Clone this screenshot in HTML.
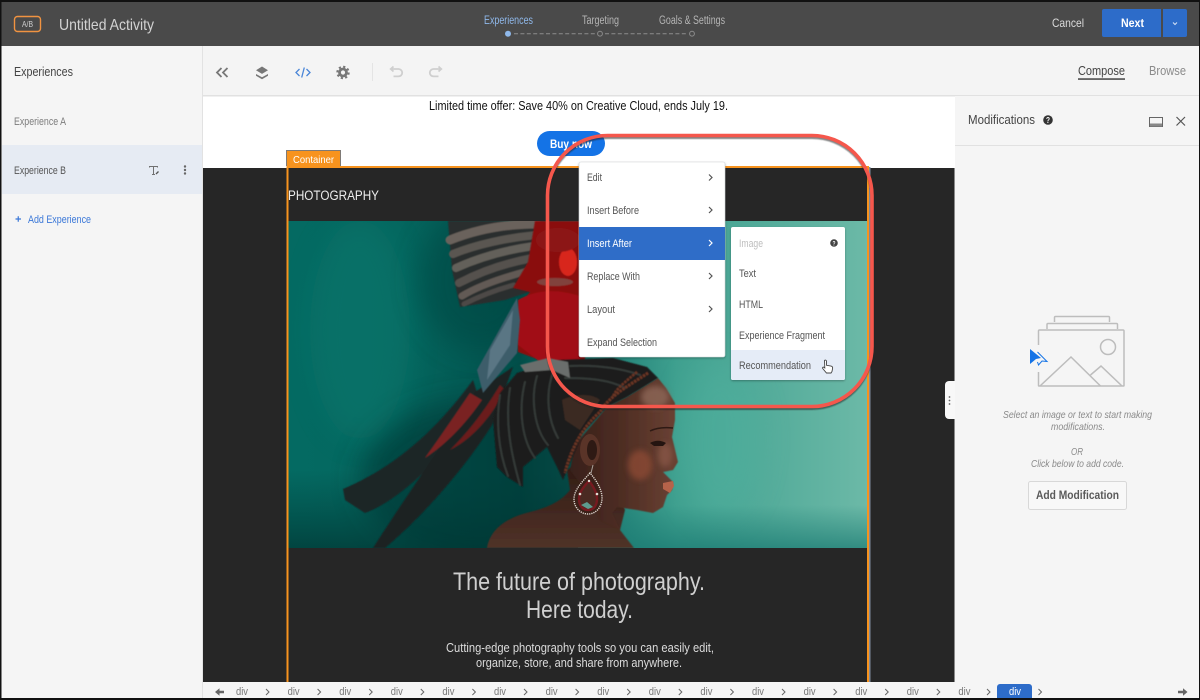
<!DOCTYPE html>
<html lang="en"><head><meta charset="utf-8"><title>Untitled Activity</title>
<style>
html,body{margin:0;padding:0;background:#000;width:1200px;height:700px;overflow:hidden}
svg{display:block}
text{font-family:"Liberation Sans",sans-serif;fill:#555;font-size:11px}
.i{font-style:italic;fill:#8a8a8a;font-size:10.500px}
.m{fill:#555;font-size:11px}
.d{fill:#777;font-size:11px}
</style></head><body>
<svg width="1200" height="700" viewBox="0 0 1200 700" xmlns="http://www.w3.org/2000/svg">
<defs>
<linearGradient id="bg" x1="0" x2="1" y1="0" y2="0">
<stop offset="0" stop-color="#046a62"/><stop offset=".19" stop-color="#05675f"/><stop offset=".31" stop-color="#035a54"/><stop offset=".4" stop-color="#024e49"/><stop offset=".53" stop-color="#1a7a72"/><stop offset=".67" stop-color="#3fa08f"/><stop offset="1" stop-color="#6cb9a7"/>
</linearGradient>
<linearGradient id="bt" x1="0" x2="0" y1="0" y2="1">
<stop offset="0" stop-color="#003c3a" stop-opacity="0"/><stop offset="1" stop-color="#003532" stop-opacity=".7"/>
</linearGradient>
<linearGradient id="bt2" x1="0" x2="0" y1="0" y2="1">
<stop offset="0" stop-color="#1a7a72" stop-opacity="0"/><stop offset="1" stop-color="#1a7a72" stop-opacity=".7"/>
</linearGradient>
<linearGradient id="skin" x1="0" x2="1" y1="0" y2="0">
<stop offset="0" stop-color="#38201a"/><stop offset=".5" stop-color="#4f2e24"/><stop offset="1" stop-color="#6b4234"/>
</linearGradient>
<linearGradient id="sh" x1="0" x2="0" y1="0" y2="1">
<stop offset="0" stop-color="#2c1812"/><stop offset="1" stop-color="#503228"/>
</linearGradient>
<filter id="b05" x="-10%" y="-10%" width="120%" height="120%"><feGaussianBlur stdDeviation=".6"/></filter>
<filter id="b1" x="-20%" y="-20%" width="140%" height="140%"><feGaussianBlur stdDeviation="1"/></filter>
<filter id="b3" x="-40%" y="-40%" width="180%" height="180%"><feGaussianBlur stdDeviation="3"/></filter>
<filter id="b12" x="-60%" y="-60%" width="220%" height="220%"><feGaussianBlur stdDeviation="14"/></filter>
<filter id="ms" x="-10%" y="-10%" width="120%" height="120%"><feDropShadow dx="0" dy="1" stdDeviation="1" flood-color="#000" flood-opacity=".3"/></filter>
<clipPath id="imgc"><rect x="288" y="221" width="580" height="327"/></clipPath>
</defs>

<rect width="1200" height="700" fill="#111"/>
<!-- top bar -->
<rect x="1" y="2" width="1198" height="44" fill="#4a4a4a"/>
<rect x="14.500" y="16.500" width="26" height="15" rx="3" fill="none" stroke="#f09341" stroke-width="1.400"/>
<text x="22" y="27" textLength="11" lengthAdjust="spacingAndGlyphs" style="font-size:8.500px;fill:#cfcfcf">A/B</text>
<text x="59" y="30" textLength="95" lengthAdjust="spacingAndGlyphs" style="font-size:16px;fill:#d2d2d2">Untitled Activity</text>
<text x="484" y="24" textLength="49" lengthAdjust="spacingAndGlyphs" style="font-size:11.500px;fill:#8fb8ea">Experiences</text>
<text x="582" y="24" textLength="37" lengthAdjust="spacingAndGlyphs" style="font-size:11.500px;fill:#b5b5b5">Targeting</text>
<text x="659" y="24" textLength="66" lengthAdjust="spacingAndGlyphs" style="font-size:11.500px;fill:#b5b5b5">Goals &amp; Settings</text>
<circle cx="508" cy="33.700" r="3" fill="#8fb8ea"/>
<path d="M514 33.700H595M605 33.700H687" stroke="#8c8c8c" stroke-width="1" stroke-dasharray="4 2.400" fill="none"/>
<circle cx="600" cy="33.700" r="2.400" fill="none" stroke="#8c8c8c" stroke-width="1"/>
<circle cx="692" cy="33.700" r="2.400" fill="none" stroke="#8c8c8c" stroke-width="1"/>
<text x="1052" y="27" textLength="32" lengthAdjust="spacingAndGlyphs" style="font-size:12px;fill:#dcdcdc">Cancel</text>
<path d="M1104 9h57v28h-57a2 2 0 0 1-2-2v-24a2 2 0 0 1 2-2z" fill="#2d6cc9"/>
<path d="M1163 9h22a2 2 0 0 1 2 2v24a2 2 0 0 1-2 2h-22z" fill="#2d6cc9"/>
<text x="1121" y="27" textLength="23" lengthAdjust="spacingAndGlyphs" style="font-size:12px;fill:#fff;font-weight:bold">Next</text>
<path d="M1173 22.500l2 2 2-2" stroke="#d8e4f6" fill="none" stroke-width="1"/>

<!-- left panel -->
<rect x="1" y="46" width="201" height="652" fill="#f5f5f5"/>
<rect x="202" y="46" width="1" height="652" fill="#e2e2e2"/>
<text x="14" y="76" textLength="59" lengthAdjust="spacingAndGlyphs" style="font-size:12.500px;fill:#444">Experiences</text>
<text x="14" y="125" textLength="52" lengthAdjust="spacingAndGlyphs" style="font-size:11px;fill:#7c7c7c">Experience A</text>
<rect x="2" y="145" width="200" height="49" fill="#e6ebf3"/>
<text x="14" y="174" textLength="52" lengthAdjust="spacingAndGlyphs" style="font-size:11px;fill:#555">Experience B</text>
<path d="M149.500 167.500V166.500H157.500V167.500M153.500 166.500V174.500M152 174.500H155" stroke="#707070" fill="none" stroke-width="1"/>
<path d="M156 174l2.500-2.500" stroke="#555" stroke-width="1.300"/>
<circle cx="185" cy="166.500" r="1.200" fill="#666"/><circle cx="185" cy="170" r="1.200" fill="#666"/><circle cx="185" cy="173.500" r="1.200" fill="#666"/>
<path d="M15.500 219H21M18.250 216.200V221.800" stroke="#3b78d8" stroke-width="1.200"/>
<text x="28" y="223" textLength="63" lengthAdjust="spacingAndGlyphs" style="font-size:11px;fill:#3b78d8">Add Experience</text>

<!-- toolbar -->
<rect x="203" y="46" width="996" height="49" fill="#f4f4f4"/>
<rect x="203" y="95" width="996" height="1.500" fill="#e1e1e1"/>
<path d="M221.500 68l-4.500 4.500 4.500 4.500M227.500 68l-4.500 4.500 4.500 4.500" fill="none" stroke="#777" stroke-width="1.800"/>
<path d="M262 66.500l6 3.700-6 3.700-6-3.700z" fill="#777"/>
<path d="M256 74l6 3.300 6-3.300v1.800l-6 3.400-6-3.400z" fill="#777"/>
<path d="M299.500 69l-3.500 3.500 3.500 3.500M306.500 69l3.500 3.500-3.500 3.500M304.300 67.500l-2.600 10" fill="none" stroke="#4a86d8" stroke-width="1.300"/>
<circle cx="343" cy="72.500" r="3.500" fill="none" stroke="#777" stroke-width="2.800"/>
<circle cx="343" cy="72.500" r="5.700" fill="none" stroke="#777" stroke-width="2" stroke-dasharray="2.200 2.270"/>
<rect x="372" y="63" width="1" height="18" fill="#e4e4e4"/>
<path d="M391 69h7.500a3.700 3.700 0 0 1 0 7.400h-5M393.500 66.500l-2.800 2.500 2.800 2.500" fill="none" stroke="#cfcfcf" stroke-width="1.800"/>
<path d="M441 69h-7.500a3.700 3.700 0 0 0 0 7.400h5M438.500 66.500l2.800 2.500-2.800 2.500" fill="none" stroke="#cfcfcf" stroke-width="1.800"/>
<text x="1078" y="75" textLength="47" lengthAdjust="spacingAndGlyphs" style="font-size:12.500px;fill:#444">Compose</text>
<rect x="1078" y="78.300" width="47" height="1.500" fill="#444"/>
<text x="1149" y="75" textLength="37" lengthAdjust="spacingAndGlyphs" style="font-size:12.500px;fill:#8a8a8a">Browse</text>

<!-- right panel -->
<rect x="955" y="96" width="244" height="602" fill="#f5f5f5"/>
<rect x="955" y="145" width="244" height="1" fill="#e1e1e1"/>
<text x="968" y="124" textLength="67" lengthAdjust="spacingAndGlyphs" style="font-size:12.500px;fill:#444">Modifications</text>
<circle cx="1048" cy="120" r="4.800" fill="#333"/>
<text x="1046" y="123" textLength="4" lengthAdjust="spacingAndGlyphs" style="font-size:8px;fill:#fff;font-weight:bold">?</text>
<rect x="1149.500" y="117.500" width="13" height="9" fill="none" stroke="#666" stroke-width="1"/>
<rect x="1150" y="123.500" width="12" height="3" fill="#888"/>
<path d="M1176.500 117l8.500 8.500M1185 117l-8.500 8.500" stroke="#555" stroke-width="1.200"/>
<g fill="none" stroke="#bdbdbd" stroke-width="1.500">
<path d="M1054.500 322v-4.500a1 1 0 0 1 1-1h53a1 1 0 0 1 1 1v4.500"/>
<path d="M1047 329v-4.500a1 1 0 0 1 1-1h68.500a1 1 0 0 1 1 1v4.500"/>
<path d="M1038.500 345v-14a1 1 0 0 1 1-1h83.500a1 1 0 0 1 1 1v54.500a.5.5 0 0 1-.5.5h-84.500a.5.5 0 0 1-.5-.5v-13.500"/>
<circle cx="1108" cy="347" r="7.500"/>
<path d="M1040 386l31-29 29.500 29M1090.500 375l10.500-9 21 20"/>
</g>
<path d="M1030 349l11 9-5 1-6 5z" fill="#1473e6"/>
<path d="M1037.500 352l9.500 9.500-5-.5-3.500 4-1-3" fill="none" stroke="#1473e6" stroke-width="1"/>
<text class="i" x="1003" y="418" textLength="149" lengthAdjust="spacingAndGlyphs">Select an image or text to start making</text>
<text class="i" x="1051" y="430" textLength="54" lengthAdjust="spacingAndGlyphs">modifications.</text>
<text class="i" x="1071" y="455" textLength="12" lengthAdjust="spacingAndGlyphs">OR</text>
<text class="i" x="1031" y="467" textLength="93" lengthAdjust="spacingAndGlyphs">Click below to add code.</text>
<rect x="1028.500" y="481.500" width="98" height="28" rx="2" fill="#f8f8f8" stroke="#d8d8d8"/>
<text x="1036" y="499" textLength="83" lengthAdjust="spacingAndGlyphs" style="font-size:11.500px;fill:#5a5a5a;font-weight:bold">Add Modification</text>

<!-- web page -->
<rect x="203" y="96.500" width="752" height="72" fill="#fff"/>
<rect x="203" y="168" width="751" height="514" fill="#262626"/>
<rect x="954" y="168" width="1" height="514" fill="#8a8a8a"/>
<text x="429" y="110" textLength="299" lengthAdjust="spacingAndGlyphs" style="font-size:13px;fill:#111">Limited time offer: Save 40% on Creative Cloud, ends July 19.</text>
<rect x="537" y="131" width="68" height="25" rx="12.500" fill="#1473e6"/>
<text x="550" y="148" textLength="42" lengthAdjust="spacingAndGlyphs" style="font-size:12px;fill:#fff;font-weight:bold">Buy now</text>
<text x="288" y="200" textLength="91" lengthAdjust="spacingAndGlyphs" style="font-size:13.500px;fill:#ececec">PHOTOGRAPHY</text>

<!-- photo -->
<g clip-path="url(#imgc)">
<rect x="288" y="221" width="580" height="327" fill="url(#bg)"/>
<ellipse cx="480" cy="480" rx="120" ry="80" fill="#013a37" opacity=".7" filter="url(#b12)"/>
<ellipse cx="360" cy="330" rx="50" ry="110" fill="#087a70" opacity=".45" filter="url(#b12)"/>
<ellipse cx="480" cy="280" rx="60" ry="70" fill="#024a45" opacity=".6" filter="url(#b12)"/>
<ellipse cx="720" cy="440" rx="40" ry="80" fill="#50b09e" opacity=".5" filter="url(#b12)"/>
<rect x="288" y="470" width="290" height="78" fill="url(#bt)"/>
<rect x="578" y="505" width="290" height="43" fill="url(#bt2)"/>
<!-- tail feathers -->
<g filter="url(#b05)">
<path d="M473 380C440 425 400 465 343 489L345 500 365 513C400 500 440 460 482 408z" fill="#1f2626"/>
<path d="M513 367L475 392C440 450 410 490 373 548H385C430 510 470 460 492 425z" fill="#1b2323"/>
<path d="M470 393C455 415 445 430 425 458 445 445 465 425 482 400z" fill="#7a2220"/>
<path d="M500 385C485 410 470 430 450 450 470 440 490 420 505 390z" fill="#6a1e1c"/>
</g>
<!-- wing feathers -->
<g filter="url(#b05)">
<path d="M448 221H540L535 290 505 300 460 307 452 270z" fill="#2a2f2e"/>
<g fill="none" stroke-linecap="round">
<path d="M537 224C500 224 470 232 450 240" stroke="#6a625c" stroke-width="9"/>
<path d="M537 235C505 238 475 245 453 254" stroke="#5a5651" stroke-width="8"/>
<path d="M534 246C505 250 478 258 456 268" stroke="#64605a" stroke-width="8"/>
<path d="M533 258C505 263 480 272 459 283" stroke="#55514d" stroke-width="8"/>
<path d="M528 271C505 277 480 285 462 296" stroke="#625a54" stroke-width="7"/>
<path d="M514 285C495 290 478 297 464 304" stroke="#4e4a46" stroke-width="5"/>
</g>
</g>
<!-- red body -->
<g filter="url(#b05)">
<path d="M535 221H585V362H545L518 352 515 310 530 292 513 288 528 262z" fill="#8a0e10"/>
<path d="M518 300C535 290 555 288 580 296V362H540L518 345z" fill="#a11012"/>
<ellipse cx="568" cy="262" rx="9" ry="14" fill="#d8261c"/>
<ellipse cx="558" cy="240" rx="22" ry="12" fill="#8c1818"/>
<ellipse cx="555" cy="282" rx="18" ry="4" fill="#7e5a52" opacity=".7"/>
</g>
<!-- blue wing -->
<path d="M517 298L477 370 483 393 517 353 520 320z" fill="#3e5d6a" filter="url(#b05)"/>
<path d="M513 310L490 350 487 380 510 345z" fill="#5a7684" filter="url(#b05)"/>
<!-- shoulders and neck -->
<path d="M487 548C490 530 505 518 530 512 545 508 560 503 570 490L567 470 600 450 625 510 620 530 634 548z" fill="url(#sh)" filter="url(#b05)"/>
<!-- face -->
<path d="M658 378L666 388 675 403 675 420 672 437 678 462 673 470 663 472 673 482 672 490 667 495 663 507 653 513 637 510 617 507 612 513 620 530 600 520 585 490 570 470 575 445 607 407 627 397z" fill="url(#skin)" filter="url(#b05)"/>
<ellipse cx="655" cy="397" rx="14" ry="11" fill="#8e6858" opacity=".8" filter="url(#b3)"/>
<ellipse cx="640" cy="465" rx="12" ry="15" fill="#8f4c36" opacity=".75" filter="url(#b3)"/>
<ellipse cx="665" cy="455" rx="7" ry="12" fill="#8d5a48" opacity=".7" filter="url(#b3)"/>
<path d="M650 443c5-3 11-3 16 0l-3 3h-9z" fill="#241410"/>
<path d="M650 431c6-3 14-4 23-3" stroke="#2e1a14" stroke-width="1.500" fill="none"/>
<path d="M663 483l10-2 1 5-4 7-7-4z" fill="#b5634a"/>
<!-- hair -->
<g filter="url(#b05)">
<path d="M517 373L557 360 613 358 647 367 658 378 627 397 607 407 583 433 570 463 563 480 557 467 547 447 523 467 523 487 507 477 497 467 493 420 500 393z" fill="#1d1c1b"/>
<g stroke="#343a39" stroke-width="2" fill="none" stroke-linecap="round">
<path d="M500 395C496 420 498 450 508 476"/><path d="M510 388C505 420 510 450 520 485"/><path d="M525 382C518 410 522 440 535 458"/><path d="M537 376C530 400 535 430 548 445"/><path d="M553 372C545 395 548 420 558 438"/><path d="M570 366C595 365 620 368 640 375"/><path d="M565 378C590 378 610 380 625 388"/>
</g>
<path d="M562 400C572 395 590 392 600 400L580 430 565 420z" fill="#3b2a22"/>
<path d="M520 365L548 358 568 362 570 378 552 370 525 372z" fill="#6a6e6c"/>
<path d="M648 373C630 385 610 395 600 412 585 425 572 445 565 473" fill="none" stroke="#6a3524" stroke-width="3" stroke-dasharray="2.500 1"/>
<path d="M637 372C625 382 615 390 613 397" fill="none" stroke="#6a3524" stroke-width="2.500" stroke-dasharray="2.500 1"/>
</g>
<!-- ear + earring -->
<ellipse cx="590" cy="450" rx="10" ry="16" fill="#5a3428"/>
<ellipse cx="592" cy="450" rx="5" ry="10" fill="#2e1a14"/>
<path d="M593 465l-2 8" stroke="#a8a098" stroke-width="1" fill="none"/>
<path d="M590 473C582 482 574 490 574 499 574 508 581 514 588 514 596 514 602 507 602 498 602 489 596 480 590 473z" fill="#3a2018" stroke="#dcd4cc" stroke-width="1.400" stroke-dasharray="1.300 .9"/>
<path d="M589 481C583 487 579 493 579 499 579 506 583 510 588 510 594 510 597 505 597 499 597 492 593 486 589 481z" fill="#4a2a22" stroke="#761a20" stroke-width="2.400"/>
<path d="M581 505l7 4 5-2-6-5z" fill="#5e9a8e"/>
<circle cx="580" cy="494" r="1.300" fill="#e4ddd4"/><circle cx="597" cy="494" r="1.300" fill="#e4ddd4"/><circle cx="589" cy="481" r="1.200" fill="#e4ddd4"/>
</g>
<!-- selection -->
<path d="M287.500 682V167H868V682" fill="none" stroke="#f7931e" stroke-width="2"/>
<rect x="869" y="167" width="1.500" height="515" fill="#7e8a9c"/>
<rect x="286" y="150" width="55" height="16" fill="#f7931e"/>
<path d="M286.500 166v-15.500h54v15.500" fill="none" stroke="#7f7a76" stroke-width="1"/>
<text x="293" y="163" textLength="41" lengthAdjust="spacingAndGlyphs" style="font-size:10.500px;fill:#fff">Container</text>

<text x="453" y="590" textLength="252" lengthAdjust="spacingAndGlyphs" style="font-size:25px;fill:#cfcfcf">The future of photography.</text>
<text x="526" y="618" textLength="107" lengthAdjust="spacingAndGlyphs" style="font-size:25px;fill:#cfcfcf">Here today.</text>
<text x="446" y="652" textLength="268" lengthAdjust="spacingAndGlyphs" style="font-size:13px;fill:#dcdcdc">Cutting-edge photography tools so you can easily edit,</text>
<text x="476" y="667" textLength="206" lengthAdjust="spacingAndGlyphs" style="font-size:13px;fill:#dcdcdc">organize, store, and share from anywhere.</text>

<!-- handle -->
<path d="M955 381h-6a4 4 0 0 0-4 4v30a4 4 0 0 0 4 4h6z" fill="#f8f8f8"/>
<circle cx="949.500" cy="397" r=".9" fill="#666"/><circle cx="949.500" cy="400.500" r=".9" fill="#666"/><circle cx="949.500" cy="404" r=".9" fill="#666"/>

<!-- breadcrumb -->
<rect x="203" y="682" width="996" height="16" fill="#f5f5f5"/>
<path d="M224 690.800h-4.500v-2.500l-4.500 3.700 4.500 3.700v-2.500h4.500z" fill="#666"/>
<path d="M1178 690.800h5v-2.500l4.500 3.700-4.500 3.700v-2.500h-5z" fill="#666"/>
<g>
<text class="d" x="236" y="695" textLength="12" lengthAdjust="spacingAndGlyphs">div</text>
<text class="d" x="287.600" y="695" textLength="12" lengthAdjust="spacingAndGlyphs">div</text>
<text class="d" x="339.200" y="695" textLength="12" lengthAdjust="spacingAndGlyphs">div</text>
<text class="d" x="390.800" y="695" textLength="12" lengthAdjust="spacingAndGlyphs">div</text>
<text class="d" x="442.400" y="695" textLength="12" lengthAdjust="spacingAndGlyphs">div</text>
<text class="d" x="494" y="695" textLength="12" lengthAdjust="spacingAndGlyphs">div</text>
<text class="d" x="545.600" y="695" textLength="12" lengthAdjust="spacingAndGlyphs">div</text>
<text class="d" x="597.200" y="695" textLength="12" lengthAdjust="spacingAndGlyphs">div</text>
<text class="d" x="648.800" y="695" textLength="12" lengthAdjust="spacingAndGlyphs">div</text>
<text class="d" x="700.400" y="695" textLength="12" lengthAdjust="spacingAndGlyphs">div</text>
<text class="d" x="752" y="695" textLength="12" lengthAdjust="spacingAndGlyphs">div</text>
<text class="d" x="803.600" y="695" textLength="12" lengthAdjust="spacingAndGlyphs">div</text>
<text class="d" x="855.200" y="695" textLength="12" lengthAdjust="spacingAndGlyphs">div</text>
<text class="d" x="906.800" y="695" textLength="12" lengthAdjust="spacingAndGlyphs">div</text>
<text class="d" x="958.400" y="695" textLength="12" lengthAdjust="spacingAndGlyphs">div</text>
</g>
<path d="M266 689l3 3-3 3M317.600 689l3 3-3 3M369.200 689l3 3-3 3M420.800 689l3 3-3 3M472.400 689l3 3-3 3M524 689l3 3-3 3M575.600 689l3 3-3 3M627.200 689l3 3-3 3M678.800 689l3 3-3 3M730.400 689l3 3-3 3M782 689l3 3-3 3M833.600 689l3 3-3 3M885.200 689l3 3-3 3M936.800 689l3 3-3 3M987 689l3 3-3 3M1038.500 689l3 3-3 3" fill="none" stroke="#666" stroke-width="1"/>
<path d="M997 698v-11a3 3 0 0 1 3-3h29a3 3 0 0 1 3 3v11z" fill="#2d6cc9"/>
<text x="1009" y="695" textLength="12" lengthAdjust="spacingAndGlyphs" style="font-size:11px;fill:#fff">div</text>

<!-- context menu -->
<rect x="579" y="162" width="146" height="195" rx="2" fill="#fff" stroke="#cfd3d6" stroke-width=".6" filter="url(#ms)"/>
<rect x="579" y="227" width="146" height="33" fill="#2f6dc8"/>
<text class="m" x="587" y="181" textLength="15" lengthAdjust="spacingAndGlyphs">Edit</text>
<text class="m" x="587" y="214" textLength="52" lengthAdjust="spacingAndGlyphs">Insert Before</text>
<text x="587" y="247" textLength="45" lengthAdjust="spacingAndGlyphs" style="font-size:11px;fill:#fff">Insert After</text>
<text class="m" x="587" y="280" textLength="53" lengthAdjust="spacingAndGlyphs">Replace With</text>
<text class="m" x="587" y="313" textLength="28" lengthAdjust="spacingAndGlyphs">Layout</text>
<text class="m" x="587" y="346" textLength="70" lengthAdjust="spacingAndGlyphs">Expand Selection</text>
<path d="M709 174.500l3 3-3 3M709 207l3 3-3 3M709 273l3 3-3 3M709 306l3 3-3 3" fill="none" stroke="#555" stroke-width="1.200"/>
<path d="M709 240l3 3-3 3" fill="none" stroke="#fff" stroke-width="1.200"/>

<!-- submenu -->
<rect x="731" y="227" width="114" height="153" rx="2" fill="#fff" filter="url(#ms)"/>
<path d="M731 350h114v28a2 2 0 0 1-2 2h-110a2 2 0 0 1-2-2z" fill="#e5ecf7"/>
<text x="739" y="247" textLength="24" lengthAdjust="spacingAndGlyphs" style="font-size:11px;fill:#bdbdbd">Image</text>
<circle cx="834" cy="243" r="3.800" fill="#444"/>
<text x="832.500" y="245.500" textLength="3" lengthAdjust="spacingAndGlyphs" style="font-size:6.500px;fill:#fff;font-weight:bold">?</text>
<text class="m" x="739" y="277" textLength="17" lengthAdjust="spacingAndGlyphs">Text</text>
<text class="m" x="739" y="308" textLength="24" lengthAdjust="spacingAndGlyphs">HTML</text>
<text class="m" x="739" y="339" textLength="86" lengthAdjust="spacingAndGlyphs">Experience Fragment</text>
<text class="m" x="739" y="369" textLength="72" lengthAdjust="spacingAndGlyphs">Recommendation</text>
<path d="M824.500 360.500c.8-.8 2-.4 2 .8v4l4.500.8c1.200.3 1.800 1 1.600 2.200l-.6 3.200-1 1.500h-4.500l-3.800-4.500c-.6-.8.400-1.800 1.300-1.100l.8.600z" fill="#fff" stroke="#444" stroke-width=".9"/>

<!-- annotation -->
<rect x="547.500" y="137.500" width="324.500" height="271" rx="60" fill="none" stroke="#222" stroke-opacity=".55" stroke-width="3" filter="url(#b05)"/>
<rect x="547.500" y="135.500" width="324.500" height="271" rx="60" fill="none" stroke="#f5574c" stroke-width="3.600"/>

<!-- frame -->
<rect x="0" y="0" width="1200" height="2" fill="#111"/>
<rect x="0" y="0" width="1.500" height="700" fill="#111"/>
<rect x="1199" y="0" width="1" height="700" fill="#111"/>
<rect x="0" y="698" width="1200" height="2" fill="#111"/>
</svg>
</body></html>
